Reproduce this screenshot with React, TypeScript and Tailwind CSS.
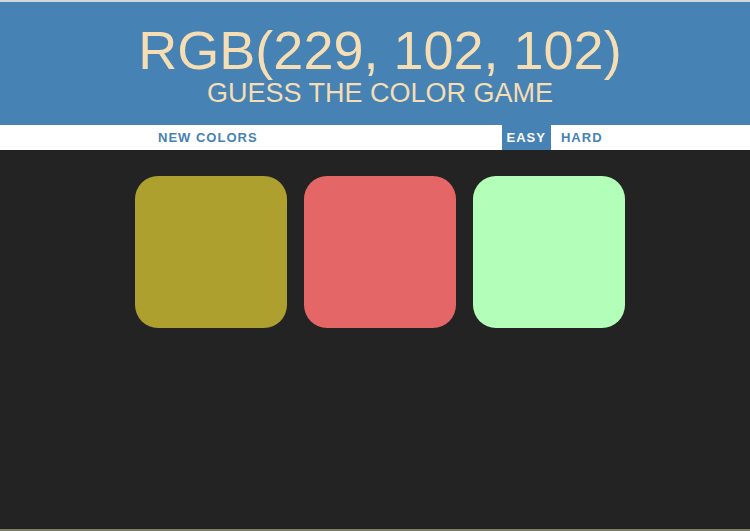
import { useState } from 'react'

const squares = ['#ada02e', '#e56666', '#b3ffb9']

export default function App() {
  const [mode, setMode] = useState<'easy' | 'hard'>('easy')

  return (
    <div
      className="h-[531px] flex flex-col bg-[#232323] border-t-2 border-t-[#d4d7da] border-b-2 border-b-[#7c7f62]"
      style={{ fontFamily: '"Liberation Sans", Arial, sans-serif' }}
    >
      <header className="bg-[#4682b4] text-[#f5deb3] text-center pl-[10px] pt-[21px] pb-[18px]">
        <h1 className="text-[54px] leading-[54px] font-normal">RGB(229, 102, 102)</h1>
        <p className="mt-[3px] text-[27px] leading-[27px]">GUESS THE COLOR GAME</p>
      </header>

      <nav className="flex h-[25px] bg-white text-[13px] leading-[25px] font-bold tracking-[1px]">
        <button className="ml-[153px] px-[5px] uppercase text-[#4682b4]">NEW COLORS</button>
        <span className="w-[239px]"></span>
        <button
          onClick={() => setMode('easy')}
          className={`px-[5px] uppercase ${mode === 'easy' ? 'bg-[#4682b4] text-white' : 'text-[#4682b4]'}`}
        >
          EASY
        </button>
        <button
          onClick={() => setMode('hard')}
          className={`ml-px px-[9px] uppercase ${mode === 'hard' ? 'bg-[#4682b4] text-white' : 'text-[#4682b4]'}`}
        >
          HARD
        </button>
      </nav>

      <main className="flex-1">
        <div className="flex gap-[17px] ml-[135px] mt-[26px]">
          {squares.map((c) => (
            <div key={c} className="w-[152px] h-[152px] rounded-[23px]" style={{ backgroundColor: c }} />
          ))}
        </div>
      </main>
    </div>
  )
}
